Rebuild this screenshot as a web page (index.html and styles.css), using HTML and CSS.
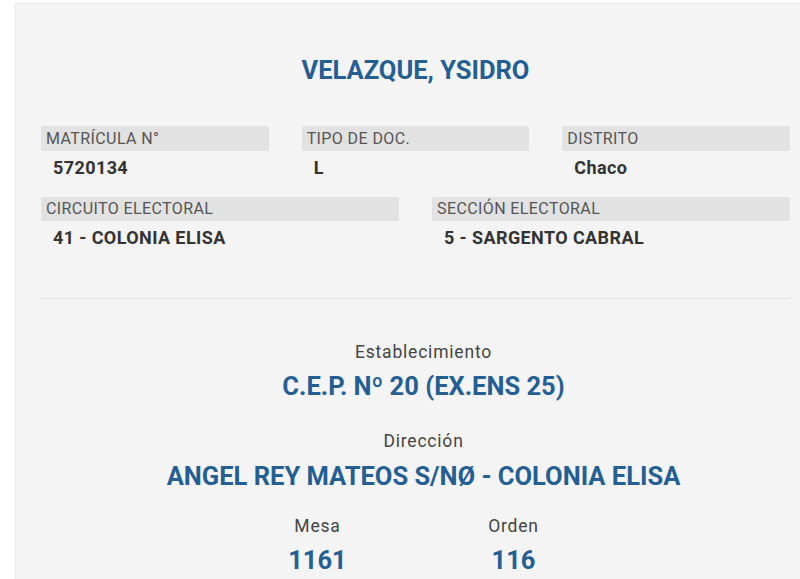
FILE: index.html
```html
<!DOCTYPE html>
<html lang="es">
<head>
<meta charset="utf-8">
<title>Consulta padrón</title>
<link rel="stylesheet" href="styles.css">
</head>
<body>
<main class="card">
  <h1 class="name">VELAZQUE, YSIDRO</h1>
  <div class="grid grid-3">
    <div class="field">
      <div class="label">MATRÍCULA N°</div>
      <div class="value">5720134</div>
    </div>
    <div class="field">
      <div class="label">TIPO DE DOC.</div>
      <div class="value">L</div>
    </div>
    <div class="field">
      <div class="label">DISTRITO</div>
      <div class="value">Chaco</div>
    </div>
  </div>
  <div class="grid grid-2">
    <div class="field">
      <div class="label">CIRCUITO ELECTORAL</div>
      <div class="value">41 - COLONIA ELISA</div>
    </div>
    <div class="field">
      <div class="label">SECCIÓN ELECTORAL</div>
      <div class="value">5 - SARGENTO CABRAL</div>
    </div>
  </div>
  <hr class="divider">
  <section class="place">
    <div class="info">
      <div class="info-label">Establecimiento</div>
      <div class="info-value">C.E.P. Nº 20 (EX.ENS 25)</div>
    </div>
    <div class="info">
      <div class="info-label">Dirección</div>
      <div class="info-value big">ANGEL REY MATEOS S/NØ - COLONIA ELISA</div>
    </div>
  </section>
  <section class="stats">
    <div class="stat">
      <div class="info-label">Mesa</div>
      <div class="info-value big">1161</div>
    </div>
    <div class="stat">
      <div class="info-label">Orden</div>
      <div class="info-value big">116</div>
    </div>
  </section>
</main>
</body>
</html>
```

FILE: styles.css
```css
html, body {
  margin: 0;
  padding: 0;
  background: #ffffff;
  overflow: hidden;
  height: 579px;
}
body {
  font-family: Roboto, "Liberation Sans", Arial, sans-serif;
}
.card {
  margin: 3px 0 0 15px;
  width: 800px;
  box-sizing: border-box;
  padding: 51px 25px 40px 25px;
  background: #f4f4f4;
  border-top: 1px solid #e9e9e9;
  border-left: 1px solid #ececec;
  min-height: 600px;
}
.name {
  margin: 0;
  text-align: center;
  font-size: 25.5px;
  line-height: 30px;
  font-weight: 700;
  color: #245f93;
}
.grid {
  display: grid;
  column-gap: 33px;
}
.grid-3 {
  grid-template-columns: repeat(3, 1fr);
  margin-top: 41px;
}
.grid-2 {
  grid-template-columns: repeat(2, 1fr);
  margin-top: 18px;
}
.label {
  height: 25px;
  line-height: 25px;
  background: #e2e2e2;
  border-radius: 2px;
  padding-left: 5px;
  font-size: 16px;
  letter-spacing: 0.4px;
  color: #555555;
}
.grid-2 .label {
  height: 24px;
  line-height: 24px;
}
.value {
  margin-top: 6px;
  line-height: 22px;
  padding-left: 12px;
  font-size: 18px;
  letter-spacing: 0.4px;
  font-weight: 700;
  color: #333333;
}
.divider {
  margin: 49px 0 0 0;
  border: 0;
  height: 1px;
  background: #e2e2e2;
}
.place {
  margin-top: 43px;
  padding-left: 16px;
  text-align: center;
}
.info + .info {
  margin-top: 31px;
}
.info-label {
  font-size: 17.5px;
  line-height: 20px;
  letter-spacing: 0.8px;
  color: #444444;
}
.info-value {
  margin-top: 10px;
  font-size: 25.5px;
  line-height: 28px;
  font-weight: 700;
  color: #245f93;
}
.info-value.big {
  line-height: 30px;
}
.stats {
  margin-top: 25px;
  display: flex;
  justify-content: center;
}
.stat {
  width: 196px;
  text-align: center;
}
.stat .info-value {
  margin-top: 9px;
}
```
